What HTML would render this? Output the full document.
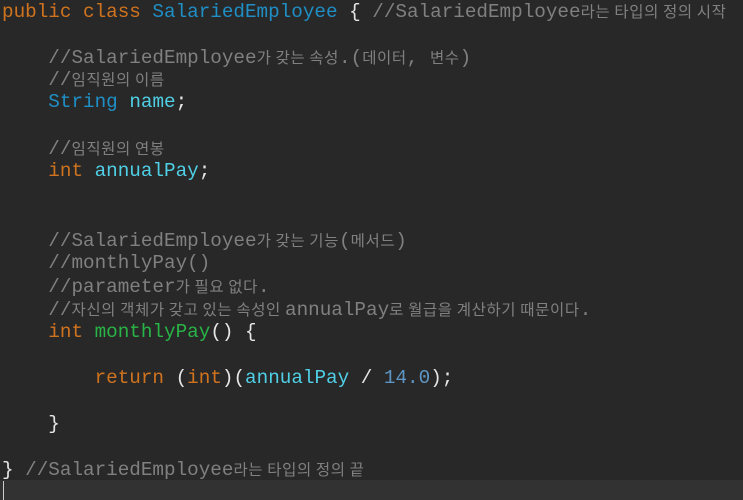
<!DOCTYPE html><html><head><meta charset="utf-8"><style>
body{margin:0;width:743px;height:500px;overflow:hidden;background:#282828;font-family:"Liberation Mono",monospace;font-size:19.3px;position:relative}
.l{position:absolute;left:2px;white-space:pre;line-height:23px;height:23px;color:#e6e6e6}
.k{color:#d0731f}.c{color:#1f8fc6}.v{color:#4fd0e6}.g{color:#808080}.m{color:#28b446}.n{color:#5d96c4}
.h{font-family:"Noto Sans CJK KR","NanumGothic",sans-serif;font-size:15.5px;letter-spacing:0.6px}
#bot{position:absolute;left:0;top:480px;width:743px;height:20px;background:#323232}
#cur{position:absolute;left:3px;top:481px;width:1px;height:19px;background:#ccc}
</style></head><body>
<div id="bot"></div><div id="cur"></div>
<div class="l" style="top:0"><span class="k">public class </span><span class="c">SalariedEmployee</span> { <span class="g">//SalariedEmployee<span class="h">라는 타입의 정의 시작</span></span></div>
<div class="l" style="top:46px">    <span class="g">//SalariedEmployee<span class="h">가 갖는 속성</span>.(<span class="h">데이터</span>, <span class="h">변수</span>)</span></div>
<div class="l" style="top:68px">    <span class="g">//<span class="h">임직원의 이름</span></span></div>
<div class="l" style="top:91px">    <span class="c">String</span> <span class="v">name</span>;</div>
<div class="l" style="top:137px">    <span class="g">//<span class="h">임직원의 연봉</span></span></div>
<div class="l" style="top:160px">    <span class="k">int</span> <span class="v">annualPay</span>;</div>
<div class="l" style="top:229px">    <span class="g">//SalariedEmployee<span class="h">가 갖는 기능</span>(<span class="h">메서드</span>)</span></div>
<div class="l" style="top:252px">    <span class="g">//monthlyPay()</span></div>
<div class="l" style="top:275px">    <span class="g">//parameter<span class="h">가 필요 없다</span>.</span></div>
<div class="l" style="top:298px">    <span class="g">//<span class="h">자신의 객체가 갖고 있는 속성인 </span>annualPay<span class="h">로 월급을 계산하기 때문이다</span>.</span></div>
<div class="l" style="top:321px">    <span class="k">int</span> <span class="m">monthlyPay</span>() {</div>
<div class="l" style="top:367px">        <span class="k">return</span> (<span class="k">int</span>)(<span class="v">annualPay</span> / <span class="n">14.0</span>);</div>
<div class="l" style="top:413px">    }</div>
<div class="l" style="top:458px">} <span class="g">//SalariedEmployee<span class="h">라는 타입의 정의 끝</span></span></div>
</body></html>
